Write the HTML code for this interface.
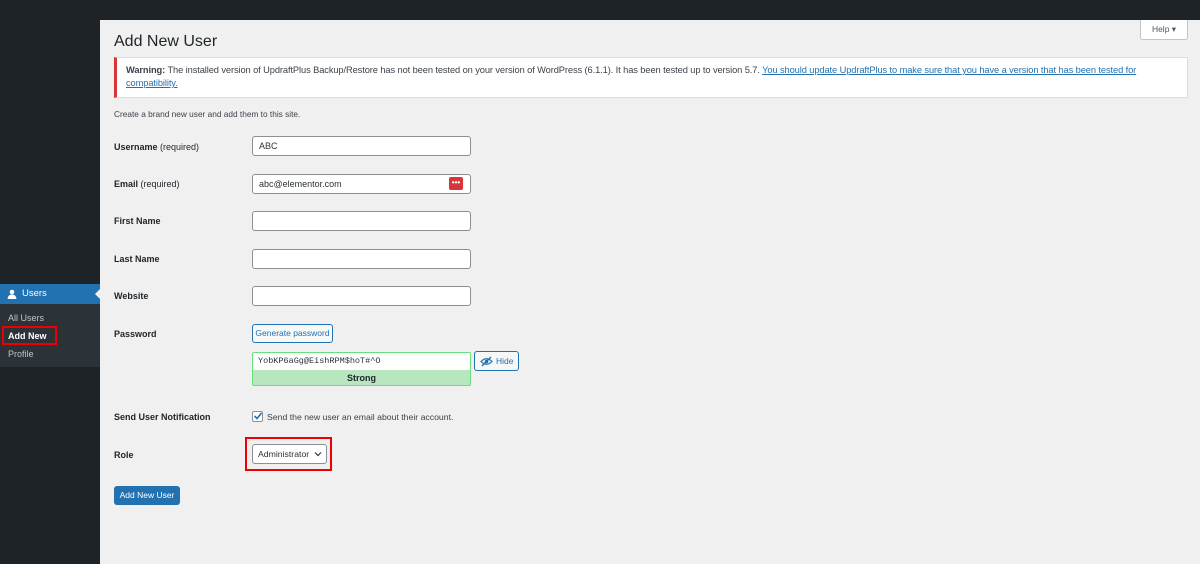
<!DOCTYPE html>
<html><head><meta charset="utf-8"><style>
*{box-sizing:border-box;margin:0;padding:0}
body{width:1200px;height:564px;overflow:hidden;background:#f0f0f1;font-family:"Liberation Sans",sans-serif;font-size:9px;color:#1d2327;position:relative}
.top{position:absolute;left:0;top:0;width:1200px;height:20px;background:#1d2327}
.side{position:absolute;left:0;top:20px;width:100px;height:544px;background:#1d2327}
.users{position:absolute;left:0;top:284px;width:100px;height:20px;background:#2271b1;color:#fff;font-size:9.5px;line-height:20px;padding-left:22px}
.users:after{content:"";position:absolute;right:0;top:5px;border:5px solid transparent;border-right-color:#f0f0f1}
.sub{position:absolute;left:0;top:304px;width:100px;height:63px;background:#2c3338}
.sub div{position:absolute;left:8px;color:#c3c4c7;font-size:9px}
.abs{position:absolute}
.help{left:1140px;top:20px;width:48px;height:20px;background:#fff;border:1px solid #c3c4c7;border-top:none;border-radius:0 0 3px 3px;color:#50575e;font-size:8.5px;line-height:18px;text-align:center}
h1{position:absolute;left:114px;top:33px;font-size:16px;font-weight:400;color:#1d2327}
.notice{left:114px;top:57px;width:1074px;height:41px;background:#fff;border:1px solid #dcdcde;border-left:3px solid #d63638;padding:6px 9px;font-size:9.3px;letter-spacing:-0.1px;line-height:13px;color:#3c434a}
.notice a{color:#2271b1}
.lbl{left:114px;font-size:9px;font-weight:bold;color:#1d2327}
.inp{left:252px;width:219px;height:20px;background:#fff;border:1px solid #8c8f94;border-radius:3px;font-size:9px;line-height:18px;padding-left:6px;color:#2c3338}
.btn2{border:1px solid #2271b1;color:#2271b1;background:#f6f7f7;border-radius:3px;font-size:8.5px;text-align:center;white-space:nowrap}
</style></head><body>
<div class="top"></div>
<div class="side"></div>
<div class="users"><svg class="abs" style="left:7px;top:5px" width="10" height="10" viewBox="0 0 10 10"><circle cx="5" cy="3" r="2.3" fill="#fff"/><path d="M0.5 10 Q1 5.5 5 5.5 Q9 5.5 9.5 10Z" fill="#fff"/></svg>Users</div>
<div class="sub">
<div style="top:9px">All Users</div>
<div style="top:27px;color:#fff;font-weight:bold">Add New</div>
<div style="top:45px">Profile</div>
</div>
<div class="abs" style="left:2px;top:326px;width:55px;height:19px;border:2px solid #e00"></div>
<div class="abs help">Help ▾</div>
<h1>Add New User</h1>
<div class="abs notice"><b>Warning:</b> The installed version of UpdraftPlus Backup/Restore has not been tested on your version of WordPress (6.1.1). It has been tested up to version 5.7. <a href="#" style="text-decoration:underline">You should update UpdraftPlus to make sure that you have a version that has been tested for compatibility.</a></div>
<div class="abs" style="left:114px;top:109px;font-size:8.3px;color:#3c434a">Create a brand new user and add them to this site.</div>

<div class="abs lbl" style="top:142px">Username <span style="font-weight:normal">(required)</span></div>
<div class="abs inp" style="top:136px">ABC</div>
<div class="abs lbl" style="top:179px">Email <span style="font-weight:normal">(required)</span></div>
<div class="abs inp" style="top:174px">abc@elementor.com</div>
<div class="abs" style="left:449px;top:177px;width:14px;height:13px;background:#d63638;border-radius:2px;color:#fff;font-size:8px;line-height:12px;text-align:center;font-weight:bold">•••</div>
<div class="abs lbl" style="top:216px">First Name</div>
<div class="abs inp" style="top:211px"></div>
<div class="abs lbl" style="top:254px">Last Name</div>
<div class="abs inp" style="top:249px"></div>
<div class="abs lbl" style="top:291px">Website</div>
<div class="abs inp" style="top:286px"></div>
<div class="abs lbl" style="top:329px">Password</div>
<div class="abs btn2" style="left:252px;top:324px;width:81px;height:19px;line-height:17px">Generate password</div>
<div class="abs" style="left:252px;top:352px;width:219px;height:34px;border:1px solid #68de7c;background:#b8e6bf;border-radius:2px"></div>
<div class="abs" style="left:253px;top:353px;width:217px;height:17px;background:#fff;font-family:'Liberation Mono',monospace;font-size:8.5px;line-height:17px;padding-left:5px;color:#2c3338">YobKP6aGg@EishRPM$hoT#^O</div>
<div class="abs" style="left:253px;top:371px;width:217px;height:14px;text-align:center;font-weight:bold;font-size:9px;line-height:14px">Strong</div>
<div class="abs btn2" style="left:474px;top:351px;width:45px;height:20px;line-height:18px;text-align:left;padding-left:21px">Hide</div>
<svg class="abs" style="left:480px;top:356px" width="13" height="11" viewBox="0 0 13 11"><path d="M1 5.5 Q6.5 0 12 5.5 Q6.5 11 1 5.5Z" fill="none" stroke="#2271b1" stroke-width="1.2"/><circle cx="6.5" cy="5.5" r="1.8" fill="#2271b1"/><path d="M2 10 L11 1" stroke="#2271b1" stroke-width="1.3"/></svg>
<div class="abs lbl" style="top:412px">Send User Notification</div>
<div class="abs" style="left:252px;top:411px;width:11px;height:11px;border:1px solid #8c8f94;border-radius:2px;background:#fff"></div>
<svg class="abs" style="left:253px;top:411px" width="10" height="10" viewBox="0 0 10 10"><path d="M1.5 5 L4 7.5 L8.5 2" fill="none" stroke="#2271b1" stroke-width="1.6"/></svg>
<div class="abs" style="left:267px;top:412px;font-size:8.7px;color:#3c434a">Send the new user an email about their account.</div>
<div class="abs lbl" style="top:450px">Role</div>
<div class="abs" style="left:245px;top:437px;width:87px;height:34px;border:2px solid #e00"></div>
<div class="abs" style="left:252px;top:444px;width:75px;height:20px;border:1px solid #8c8f94;border-radius:3px;background:#fff;font-size:8.7px;line-height:18px;padding-left:5px;color:#2c3338">Administrator</div>
<svg class="abs" style="left:314px;top:451px" width="8" height="6" viewBox="0 0 8 6"><path d="M1 1.5 L4 4.5 L7 1.5" fill="none" stroke="#2c3338" stroke-width="1.2"/></svg>
<div class="abs" style="left:114px;top:486px;width:66px;height:19px;background:#2271b1;border-radius:3px;color:#fff;font-size:8.5px;line-height:19px;text-align:center;white-space:nowrap">Add New User</div>
</body></html>
